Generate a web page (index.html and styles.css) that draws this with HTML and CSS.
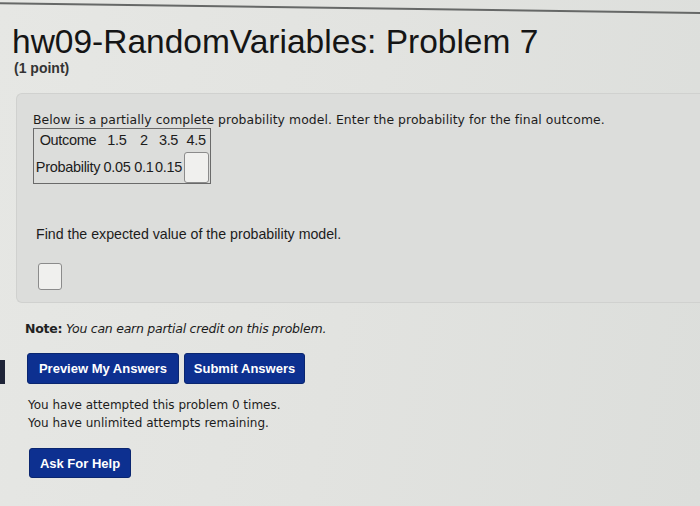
FILE: index.html
```html
<!DOCTYPE html>
<html>
<head>
<meta charset="utf-8">
<link rel="stylesheet" href="styles.css">
</head>
<body>
<div class="topline"></div>
<div class="page">
  <h1 class="title">hw09-RandomVariables: Problem 7</h1>
  <div class="points">(1 point)</div>
  <div class="panel">
    <p class="intro">Below is a partially complete probability model. Enter the probability for the final outcome.</p>
    <table class="model">
      <tr><td class="lab c1">Outcome</td><td class="c2">1.5</td><td class="c3">2</td><td class="c4">3.5</td><td class="c5">4.5</td></tr>
      <tr><td class="lab">Probability</td><td>0.05</td><td>0.1</td><td>0.15</td><td><span class="box small"></span></td></tr>
    </table>
    <p class="find">Find the expected value of the probability model.</p>
    <span class="box answer"></span>
  </div>
  <p class="note"><b>Note:</b> <i>You can earn partial credit on this problem.</i></p>
  <div class="buttons">
    <button class="btn preview">Preview My Answers</button>
    <button class="btn submit">Submit Answers</button>
  </div>
  <p class="attempts">You have attempted this problem 0 times.<br>You have unlimited attempts remaining.</p>
  <button class="btn help">Ask For Help</button>
</div>
<div class="sidebar-tab"></div>
</body>
</html>
```
FILE: styles.css
```css
html, body { margin: 0; padding: 0; }
body {
  width: 700px;
  height: 506px;
  overflow: hidden;
  background: linear-gradient(100deg, #e6e7e4 0%, #e2e3e0 50%, #dcdedb 100%);
  font-family: "Liberation Sans", Arial, sans-serif;
  color: #1c1c1c;
  position: relative;
}
.topline {
  position: absolute;
  left: -10px;
  top: 2px;
  width: 720px;
  height: 2px;
  background: #666867;
  transform: rotate(0.8deg);
  transform-origin: left center;
}
.page {
  padding: 24px 0 0 12px;
}
.title {
  margin: 0;
  font-size: 33.5px;
  font-weight: normal;
  line-height: 36px;
  color: #151515;
}
.points {
  font-size: 14px;
  font-weight: bold;
  color: #333;
  margin: 0 0 0 2px;
  line-height: 16px;
}
.panel {
  margin: 17px 0 0 4px;
  height: 210px;
  background: #dcdddb;
  border: 1px solid #d0d1cf;
  border-right: none;
  border-radius: 6px 0 0 6px;
  padding: 0 0 0 16px;
  box-sizing: border-box;
}
.intro {
  margin: 17px 0 0 0;
  font-family: "DejaVu Sans", sans-serif;
  font-size: 12.4px;
  letter-spacing: 0.07px;
  line-height: 17px;
}
.model {
  border: 1px solid #6a6a6a;
  border-collapse: separate;
  border-spacing: 0;
  margin-top: 0;
  font-family: "Liberation Sans", Arial, sans-serif;
  font-size: 14.5px;
  letter-spacing: -0.3px;
}
.model td {
  padding: 0;
  text-align: center;
}
.model tr:first-child td { height: 22px; }
.model tr:last-child td { height: 32px; }
.model td.lab { padding-left: 1px; }
.model .c1 { width: 66px; }
.model .c2 { width: 32px; }
.model .c3 { width: 22px; }
.model .c4 { width: 26px; }
.model .c5 { width: 28px; }
.box {
  display: inline-block;
  background: #f0f0ee;
  border: 1px solid #8b8b8b;
  border-radius: 3px;
  box-sizing: border-box;
}
.box.small { width: 25px; height: 31px; vertical-align: middle; margin-left: 1px; }
.find {
  margin: 41px 0 0 3px;
  font-size: 14.2px;
  line-height: 18px;
}
.box.answer { width: 24px; height: 27px; margin: 20px 0 0 5px; }
.note {
  margin: 18px 0 0 13px;
  font-family: "DejaVu Sans", sans-serif;
  font-size: 12.5px;
  letter-spacing: -0.25px;
  line-height: 16px;
}
.note b { color: #222; }
.buttons {
  display: flex;
  gap: 5px;
  margin: 16px 0 0 15px;
}
.btn {
  background: #0d3090;
  color: #fff;
  border: 1px solid #0a2670;
  border-radius: 3px;
  font-family: "Liberation Sans", Arial, sans-serif;
  font-weight: bold;
  font-size: 13px;
  height: 31px;
  padding: 0;
}
.btn.preview { width: 152px; }
.btn.submit { width: 121px; }
.attempts {
  margin: 12px 0 0 16px;
  font-family: "DejaVu Sans", sans-serif;
  font-size: 12px;
  line-height: 18px;
  letter-spacing: 0px;
}
.btn.help {
  width: 102px;
  height: 30px;
  margin: 16px 0 0 17px;
}
.sidebar-tab {
  position: absolute;
  left: 0;
  top: 360px;
  width: 5px;
  height: 24px;
  background: #1f2438;
}
```
